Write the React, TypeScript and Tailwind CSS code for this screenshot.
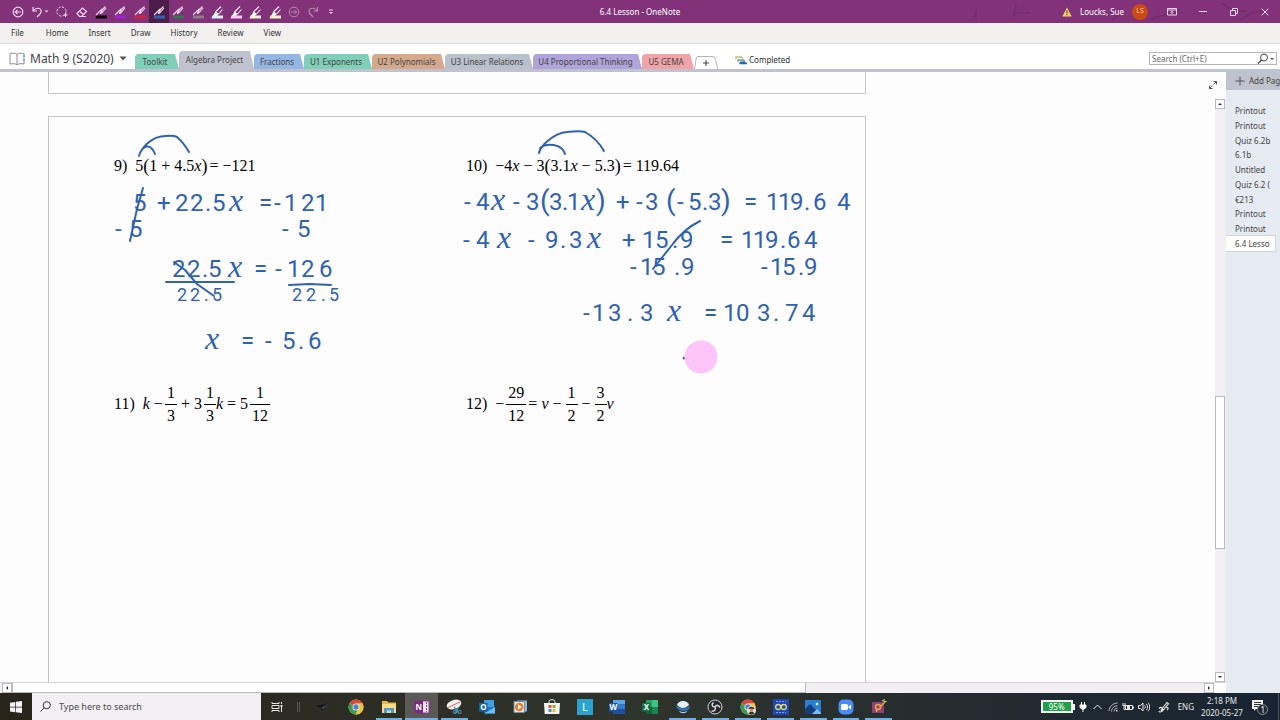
import type { ReactNode } from 'react';
import { clsx } from 'clsx';

/* ---------- Title bar ---------- */

const pens = [
  { name: 'Black pen', color: '#0b0008' },
  { name: 'Purple pen', color: '#a31fd8' },
  { name: 'Red pen', color: '#d3203c' },
  { name: 'Blue pen', color: '#2f66b4', active: true },
  { name: 'Green pen', color: '#2c7a4b' },
  { name: 'Gray pen', color: '#8b7f8c' },
];

const highlighters = [
  { name: 'Light blue highlighter', color: '#d9f1fb' },
  { name: 'Pink highlighter', color: '#fbcdf2' },
  { name: 'Cream highlighter', color: '#fbf6d5' },
  { name: 'Yellow highlighter', color: '#f6f7c0' },
];

const PenIcon = ({ color }: { color: string }) => (
  <svg viewBox="0 0 14 14" className="h-3.5 w-3.5" fill="none">
    <path d="M2.500 10.500h10.500v3H1.500z" fill={color} />
    <path d="M2 10 7.500 4.500C8.500 3.500 8.500 4.500 8 5.500L6.500 8C6 9 7 8.500 8 7.500L12 3M6.500 6.500 11.500 1.500" stroke="#f0d7ec" strokeWidth="1.100" />
  </svg>
);

const HighlighterIcon = ({ color }: { color: string }) => (
  <svg viewBox="0 0 14 14" className="h-3.5 w-3.5" fill="none">
    <path d="M2.500 10.500h10.500v3H1.500z" fill={color} />
    <path d="M3 11 5.500 6.500l3.500 2.500-2.500 2z" fill="#fff" />
    <path d="M5.500 7 11 1.500M8.500 9 12.500 4.500" stroke="#f6e6f4" strokeWidth="1.100" />
  </svg>
);

const IconButton = ({ label, className, children }: { label: string; className?: string; children: ReactNode }) => (
  <button aria-label={label} className={clsx('flex h-full items-center justify-center', className)}>
    {children}
  </button>
);

const TitleBar = () => (
  <header className="relative flex h-[23px] shrink-0 items-center justify-between bg-[#813278] text-[8px] text-white">
    <div className="flex h-full items-center">
      <IconButton label="Back" className="ml-2 w-5">
        <svg viewBox="0 0 12 12" className="h-3 w-3" fill="none" stroke="#f0d7ec" strokeWidth="1.200">
          <circle cx="6" cy="6" r="4.800" />
          <path d="M9 6H3.500M5.500 3.800 3.300 6l2.200 2.200" />
        </svg>
      </IconButton>
      <IconButton label="Undo" className="w-6">
        <svg viewBox="0 0 18 12" className="h-3 w-[18px]" fill="none" stroke="#f0d7ec" strokeWidth="1.200">
          <path d="M2 1v4h4M2.200 4.800C5 1.200 9.800 1.600 10.200 5c.2 2-1.600 3.600-4.200 6" />
          <path d="M13.500 4.500h4l-2 2z" fill="#f0d7ec" stroke="none" />
        </svg>
      </IconButton>
      <IconButton label="Lasso select" className="w-5">
        <svg viewBox="0 0 12 12" className="h-3 w-3" fill="none" stroke="#f0d7ec">
          <circle cx="5.500" cy="5.500" r="4.600" strokeDasharray="2.200 1.400" />
          <path d="M9.500 7v4M7.500 9h4" />
        </svg>
      </IconButton>
      <div className="flex h-full w-[251px]">
        <IconButton label="Eraser" className="flex-1">
          <svg viewBox="0 0 12 12" className="h-3 w-3" fill="none" stroke="#f0d7ec" strokeWidth="1.200">
            <path d="M1 7.500 6.500 2 10.500 5.500 5.500 10.500H3.500zM3.500 5l4 3.800M5 10.500h5" />
          </svg>
        </IconButton>
        {pens.map((pen) => (
          <IconButton key={pen.name} label={pen.name} className={clsx('flex-1', pen.active && 'bg-[#4c1d4b]')}>
            <PenIcon color={pen.color} />
          </IconButton>
        ))}
        {highlighters.map((pen) => (
          <IconButton key={pen.name} label={pen.name} className="flex-1">
            <HighlighterIcon color={pen.color} />
          </IconButton>
        ))}
        <IconButton label="Forward" className="flex-1">
          <svg viewBox="0 0 12 12" className="h-3 w-3" fill="none" stroke="#bd86b6">
            <circle cx="6" cy="6" r="4.800" />
            <path d="M3 6h5.500M6.500 3.800 8.700 6 6.500 8.200" />
          </svg>
        </IconButton>
        <IconButton label="Redo" className="flex-1">
          <svg viewBox="0 0 12 12" className="h-3 w-3" fill="none" stroke="#bd86b6" strokeWidth="1.200">
            <path d="M10.500 1v4h-4M10.300 4.800C7.500 1.200 2.400 1.600 2 5c-.2 2 1.600 3.600 4.200 6" />
          </svg>
        </IconButton>
      </div>
      <IconButton label="Customize toolbar" className="w-4">
        <svg viewBox="0 0 6 6" className="h-1.5 w-1.5">
          <path d="M1 .5h4v1H1zM1 3h4L3 5z" fill="#f0d7ec" />
        </svg>
      </IconButton>
    </div>

    {/* Faint leaf pattern of the window theme */}
    <svg viewBox="0 0 320 23" className="absolute right-0 top-0 h-[23px] w-80" fill="none" stroke="#6f2a68" strokeWidth="2" opacity="0.5">
      <path d="M12 19c2-4 3-8 5-10v10z" fill="#6f2a68" stroke="none" />
      <path d="M52 13h18M56 4l-2 12M152 20l12-8M190 20c8-6 20-4 30-10M262 3c6 4 12 10 24 8M280 20c8-4 12-10 26-8" />
    </svg>

    <span className="absolute left-1/2 -translate-x-1/2 whitespace-nowrap">6.4 Lesson - OneNote</span>

    <div className="relative flex h-full items-center">
      <svg viewBox="0 0 10 10" className="mr-2 h-2.5 w-2.5">
        <path d="M5 .5 9.700 9.500H.3z" fill="#f4cf6c" />
        <path d="M4.500 3.500h1v3h-1zM4.500 7.300h1v1h-1z" fill="#5c2a1c" />
      </svg>
      <span>Loucks, Sue</span>
      <span className="ml-2 flex h-4 w-4 items-center justify-center rounded-full bg-[#cb4a14] text-[7px] text-[#f8cfae]">LS</span>
      <IconButton label="Ribbon display options" className="ml-2 w-[31px]">
        <svg viewBox="0 0 10 8" className="h-2 w-2.5" fill="none" stroke="#f0d7ec">
          <path d="M.5.5h9v6.500h-9zM.5 2h9M5 6V3.500M3.600 4.600 5 3.200l1.400 1.400" />
        </svg>
      </IconButton>
      <IconButton label="Minimize" className="w-[31px]">
        <span className="h-px w-2 bg-[#f0d7ec]" />
      </IconButton>
      <IconButton label="Restore" className="w-[31px]">
        <svg viewBox="0 0 8 8" className="h-2 w-2" fill="none" stroke="#f0d7ec">
          <path d="M.5 2.500h5v5h-5zM2.500 2V.5h5v5H6" />
        </svg>
      </IconButton>
      <IconButton label="Close" className="w-[31px]">
        <svg viewBox="0 0 8 8" className="h-2 w-2" fill="none" stroke="#f0d7ec">
          <path d="m.7.7 6.600 6.600M7.300.7.7 7.300" />
        </svg>
      </IconButton>
    </div>
  </header>
);

/* ---------- Menu and section tabs ---------- */

const MenuBar = () => (
  <nav className="flex h-[21px] shrink-0 items-center gap-5 border-b border-[#dcdadb] bg-[#f1f0ef] pl-[11px] text-[8px] text-[#333]">
    <button className="mr-0.5">File</button>
    {['Home', 'Insert', 'Draw', 'History', 'Review', 'View'].map((item) => (
      <button key={item}>{item}</button>
    ))}
  </nav>
);

const sections = [
  { name: 'Toolkit', style: 'w-11 bg-[#80cfb9]' },
  { name: 'Algebra Project', style: 'h-[18px] w-[75px] bg-[#c0c3cd]', active: true },
  { name: 'Fractions', style: 'w-[50px] bg-[#93b6e3]' },
  { name: 'U1 Exponents', style: 'w-[68px] bg-[#80cfb9]' },
  { name: 'U2 Polynomials', style: 'w-[73px] bg-[#d5a98c]' },
  { name: 'U3 Linear Relations', style: 'w-[88px] bg-[#b9c1cb]' },
  { name: 'U4 Proportional Thinking', style: 'w-[109px] bg-[#b0a5da]' },
  { name: 'U5 GEMA', style: 'w-[52px] bg-[#f0a3a8]' },
];

const SectionBar = () => (
  <div className="flex h-7 shrink-0 items-end border-b-[3px] border-[#c0c3cd] bg-white text-[#444]">
    <button className="flex h-full w-[135px] shrink-0 items-center pl-[9px] pt-1 text-[12px]">
      <svg viewBox="0 0 16 14" className="mr-[5px] h-3.5 w-4" fill="none" stroke="#8d8d93">
        <path d="M8 2.500C6.500 1 4 1 1 1.500v10.500c3-.5 5.500-.5 7 .8 1.500-1.300 4-1.300 7-.8V1.500C12 1 9.500 1 8 2.500zM8 2.500v10" />
        <path d="M15 3v2M15 7v2" stroke="#5d8fbd" />
      </svg>
      <span className="whitespace-nowrap">Math 9 (S2020)</span>
      <svg viewBox="0 0 8 5" className="ml-[5px] h-[5px] w-2">
        <path d="M.5.5h7L4 4.500z" fill="#555" />
      </svg>
    </button>
    <div className="flex items-end">
      {sections.map((section) => (
        <button
          key={section.name}
          className={clsx(
            'flex h-[15px] items-center justify-center whitespace-nowrap rounded-t pr-1 text-[8px] [clip-path:polygon(0_0,calc(100%-4px)_0,100%_100%,0_100%)]',
            section.style,
            section.active && 'pb-px',
          )}
        >
          {section.name}
        </button>
      ))}
      <button aria-label="New section" className="h-[13px] w-[25px]">
        <svg viewBox="0 0 25 13" className="h-[13px] w-[25px]" fill="none">
          <path d="M.5 13C2 8 1 .5 4 .5h15c3 0 3 8 5 12.500" stroke="#b4b5ba" />
          <path d="M12 4v6M9 7h6" stroke="#444" />
        </svg>
      </button>
    </div>
    <button className="mb-[3px] ml-4 flex items-center text-[8px] text-[#333]">
      <svg viewBox="0 0 12 9" className="mr-0.5 h-[9px] w-3" fill="none" strokeWidth="1.500">
        <path d="M1 3V1h5l2 1.500" stroke="#c9b96a" />
        <path d="M3 5.500V4h5l2 1" stroke="#69a58f" />
        <path d="M5 7.500c0-2 5-2 6.500 0z" fill="#2e67b1" stroke="#2e67b1" />
      </svg>
      Completed
    </button>
    <div className="mb-1 ml-auto mr-[3px] flex h-[13px] w-32 items-center border border-[#b5b5b9]">
      <input
        type="text"
        aria-label="Search"
        placeholder="Search (Ctrl+E)"
        className="min-w-0 flex-1 bg-transparent pl-0.5 text-[8px] outline-none placeholder:text-[#666]"
      />
      <button aria-label="Search options" className="mr-px">
        <svg viewBox="0 0 18 11" className="h-[11px] w-[18px]" fill="none" stroke="#444">
          <circle cx="7" cy="4.500" r="3.500" />
          <path d="M4.500 7 1 10.500" strokeWidth="1.200" />
          <path d="M13 5h4l-2 2z" fill="#444" stroke="none" />
        </svg>
      </button>
    </div>
  </div>
);

/* ---------- Worksheet ---------- */

const Frac = ({ top, bottom }: { top: string; bottom: string }) => (
  <span className="inline-flex flex-col text-center leading-[22px]">
    <span className="border-b border-black px-0.5">{top}</span>
    <span className="px-0.5">{bottom}</span>
  </span>
);

const Problem = ({ number, children }: { number: number; children: ReactNode }) => (
  <div className="flex h-11 items-center whitespace-nowrap">
    <span className="mr-2">{number})</span>
    {children}
  </div>
);

// Pen ink: one entry per written line, with the left edge of every character
const inkLines = [
  { text: '5+22.5x=-121', y: 211, xs: [133, 157, 175, 190, 205, 212, 229, 259, 274, 284, 301, 315] },
  { text: '-5-5', y: 237, xs: [115, 129, 282, 297] },
  { text: '22.5x=-126', y: 277, xs: [172, 187, 202, 208, 228, 254, 275, 287, 301, 319] },
  { text: 'x=-5.6', y: 349, xs: [205, 241, 265, 282, 298, 308] },
  { text: '-4x-3(3.1x)+-3(-5.3)=119.64', y: 210, xs: [464, 476, 491, 513, 526, 540, 549, 562, 567, 581, 596, 616, 636, 645, 666, 677, 688, 702, 708, 721, 744, 766, 778, 790, 804, 813, 837] },
  { text: '-4x-9.3x+15.9=119.64', y: 248, xs: [463, 476, 497, 528, 545, 560, 569, 587, 622, 642, 655, 672, 680, 720, 741, 753, 765, 780, 787, 804] },
  { text: '-15.9-15.9', y: 275, xs: [630, 640, 652, 674, 681, 761, 770, 782, 798, 804] },
  { text: '-13.3x=103.74', y: 321, xs: [583, 592, 608, 627, 640, 667, 704, 723, 736, 757, 773, 785, 802] },
];

const inkDenominators = [
  { text: '22.5', y: 301, xs: [177, 190, 204, 212] },
  { text: '22.5', y: 301, xs: [292, 306, 321, 329] },
];

const inkGlyphs: Record<string, string> = {
  x: "font-['Liberation_Serif',serif] text-[32px] italic",
  '(': 'text-[28px]',
  ')': 'text-[28px]',
};

const InkText = ({ text, y, xs }: { text: string; y: number; xs: number[] }) => (
  <text y={y}>
    {text.split('').map((char, i) => (
      <tspan key={i} x={xs[i]} className={inkGlyphs[char]}>
        {char}
      </tspan>
    ))}
  </text>
);

const InkLayer = () => (
  <svg
    viewBox="48 116 818 566"
    className="pointer-events-none absolute -left-px -top-px h-[566px] w-[818px] font-['Roboto',sans-serif]"
    fill="none"
  >
    <g fill="#2f62b3" className="text-[24px]">
      {inkLines.map((line) => (
        <InkText key={line.y + line.text} {...line} />
      ))}
    </g>
    <g fill="#2f62b3" className="text-[18px]">
      {inkDenominators.map((line) => (
        <InkText key={line.xs[0]} {...line} />
      ))}
    </g>
    <g stroke="#2f62b3" strokeWidth="2" strokeLinecap="round" strokeLinejoin="round">
      {/* distribution arcs */}
      <path d="M139 156C141 148 151 138 161 136.500C169 135.500 175 136 177 137C182 141 186 147 189 152M141 151C145 145 151 144 155 154" />
      <path d="M539 153C540 146 554 133 567 132C575 131 582 131 585 132C594 137 600 144 604 151M540 148C546 143 562 143 565 154" />
      {/* crossed out terms */}
      <path d="M143 188 137 209 130 241" />
      <path d="M174 262 185 270 197 284 214 296" />
      <path d="M653 269 672 245C680 234 690 226 700 221" />
      {/* fraction bars */}
      <path d="M166 282 234 282M289 285 310 284 331 285" />
    </g>
    <circle cx="684" cy="358" r="1.500" fill="#5f5a95" />
    <circle cx="701" cy="357" r="16.500" fill="#fcc5fa" />
  </svg>
);

const Worksheet = () => (
  <div className="relative ml-12 mt-[22px] h-[640px] w-[818px] border border-[#c3c3c8] pl-[65px] pt-[27px] font-['Liberation_Serif',serif] text-[16px] text-black">
    <div className="grid grid-cols-[352px_1fr] gap-y-[194px]">
      <Problem number={9}>
        <span>5</span>
        <span className="text-[18px]">(</span>
        <span>1 + 4.5<i>x</i></span>
        <span className="mr-0.5 text-[18px]">)</span>
        <span>= −121</span>
      </Problem>
      <Problem number={10}>
        <span>−4<i>x</i> − 3</span>
        <span className="text-[18px]">(</span>
        <span>3.1<i>x</i> − 5.3</span>
        <span className="mr-0.5 text-[18px]">)</span>
        <span>= 119.64</span>
      </Problem>
      <Problem number={11}>
        <span className="mr-0.5"><i>k</i> −</span>
        <Frac top="1" bottom="3" />
        <span className="ml-1 mr-0.5">+ 3</span>
        <Frac top="1" bottom="3" />
        <span className="mr-0.5"><i>k</i> = 5</span>
        <Frac top="1" bottom="12" />
      </Problem>
      <Problem number={12}>
        <span className="mr-0.5">−</span>
        <Frac top="29" bottom="12" />
        <span className="ml-0.5 mr-1">= <i>v</i> −</span>
        <Frac top="1" bottom="2" />
        <span className="mx-1">−</span>
        <Frac top="3" bottom="2" />
        <i>v</i>
      </Problem>
    </div>
    <InkLayer />
  </div>
);

const arrows = {
  up: 'M1 4h4L3 2z',
  down: 'M1 2h4L3 4z',
  left: 'M4 1v4L2 3z',
  right: 'M2 1v4l2-2z',
};

const ScrollArrow = ({ direction }: { direction: keyof typeof arrows }) => (
  <button
    aria-label={`Scroll ${direction}`}
    className="flex h-2.5 w-2.5 shrink-0 items-center justify-center border border-[#b9b9be] bg-white"
  >
    <svg viewBox="0 0 6 6" className="h-1.5 w-1.5">
      <path d={arrows[direction]} fill="#333" />
    </svg>
  </button>
);

const Canvas = () => (
  <main className="relative flex min-w-0 flex-1 flex-col bg-[#fefdfe]">
    <div className="flex min-h-0 flex-1">
      <div className="min-w-0 flex-1 overflow-hidden">
        {/* Bottom edge of the previous printout page */}
        <div className="ml-12 h-[22px] w-[818px] border border-t-0 border-[#c3c3c8]" />
        <Worksheet />
      </div>
      <div className="mt-[27px] flex w-[11px] flex-col bg-[#f1eff1]">
        <ScrollArrow direction="up" />
        <div className="flex-[287]" />
        <div className="mr-px flex-[151] border border-[#b9b9be] bg-white" />
        <div className="flex-[123]" />
        <ScrollArrow direction="down" />
      </div>
    </div>
    <div className="flex h-[11px] border-t border-[#d5d5d9] bg-[#f1eff1] pl-0.5">
      <ScrollArrow direction="left" />
      <div className="flex-[793] border border-t-0 border-[#b9b9be] bg-white" />
      <div className="flex-[398]" />
      <ScrollArrow direction="right" />
      <div className="w-3 bg-white" />
    </div>
    <button aria-label="Full page view" className="absolute right-2 top-2">
      <svg viewBox="0 0 10 10" className="h-2.5 w-2.5" fill="none" stroke="#555">
        <path d="M5.500 1.500h3v3M8.500 1.500 5.500 4.500M1.500 5.500v3h3M1.500 8.500l3-3" />
      </svg>
    </button>
  </main>
);

const pages = ['Printout', 'Printout', 'Quiz 6.2b', '6.1b', 'Untitled', 'Quiz 6.2 (', '€213', 'Printout', 'Printout', '6.4 Lesso'];

const PageList = () => (
  <aside className="w-[54px] shrink-0 overflow-hidden bg-[#e6eaf1] text-[8px] text-[#444]">
    <button className="flex h-[18px] w-full items-center whitespace-nowrap bg-[#c0c3cd] pl-[9px]">
      <svg viewBox="0 0 10 10" className="mr-1 h-2.5 w-2.5 shrink-0" fill="none" stroke="#555">
        <path d="M5 .5v9M.5 5h9" />
      </svg>
      Add Pag
    </button>
    <ul className="mt-3.5 grid h-[147px] auto-rows-fr">
      {pages.map((page, i) => (
        <li key={i} className="min-h-0">
          <button
            className={clsx(
              'flex h-full w-[49px] items-center whitespace-nowrap pl-[9px]',
              i === pages.length - 1 && 'bg-white outline outline-[#d3d5dc]',
            )}
          >
            {page}
          </button>
        </li>
      ))}
    </ul>
  </aside>
);

/* ---------- Taskbar ---------- */

const ChromeLogo = () => (
  <>
    <circle cx="8" cy="8" r="7.500" fill="#e8c53a" />
    <path d="M8 8 1.500 4.300A7.500 7.500 0 0 1 14.500 4.300z" fill="#d8473a" />
    <path d="M1.500 4.300A7.500 7.500 0 0 0 7.500 15.500L10.500 9.500 8 8z" fill="#3d9a52" />
    <path d="M8 4.300h6.500A7.500 7.500 0 0 1 7.500 15.500L11 9z" fill="#f0c53a" />
    <circle cx="8" cy="8" r="3.500" fill="#f3f3ee" />
    <circle cx="8" cy="8" r="2.700" fill="#4a84d6" />
  </>
);

const apps: { name: string; open?: boolean; active?: boolean; icon: ReactNode }[] = [
  { name: 'Chrome', icon: <ChromeLogo /> },
  {
    name: 'File Explorer',
    open: true,
    icon: (
      <>
        <path d="M1 2h5l1.500 1.500H15V14H1z" fill="#e5b94c" />
        <path d="M1 5h14v9H1z" fill="#f8dc85" />
        <path d="M3 14V9h10v5h-3v-2.500H6V14z" fill="#4a9cd8" />
      </>
    ),
  },
  {
    name: 'OneNote',
    open: true,
    active: true,
    icon: (
      <>
        <path d="M7 2h8v12H7z" fill="#f4e9f4" stroke="#8a3a8c" />
        <path d="M12.500 3v10" stroke="#8a3a8c" strokeDasharray="2 1" />
        <path d="M0 2.500 9 1v14l-9-1.500z" fill="#7c2b80" />
        <text x="1.500" y="11" fill="#fff" fontSize="8" fontWeight="bold">N</text>
      </>
    ),
  },
  {
    name: 'Snipping Tool',
    open: true,
    icon: (
      <>
        <ellipse cx="8" cy="5.500" rx="7.500" ry="4.500" transform="rotate(-18 8 5.500)" fill="#f4eeee" />
        <path d="M2 8.500 14 3" stroke="#d4676a" />
        <path d="m8 8 5 6M13 8l-4 6" stroke="#4a90b5" strokeWidth="1.300" />
        <circle cx="9" cy="13" r="1.700" stroke="#4a90b5" fill="none" />
        <circle cx="13.500" cy="13" r="1.700" stroke="#4a90b5" fill="none" />
      </>
    ),
  },
  {
    name: 'Outlook',
    icon: (
      <>
        <path d="M5 1h10v13H5z" fill="#3f9fe0" />
        <path d="M5 8h11v6.500H5z" fill="#2170bd" />
        <path d="m6 14 10-6v6.500H6z" fill="#6cc0ee" />
        <path d="M0 4h8.500v8.500H0z" fill="#1260ae" />
        <text x="1.200" y="11" fill="#fff" fontSize="8" fontWeight="bold">O</text>
      </>
    ),
  },
  {
    name: 'Media Player',
    icon: (
      <>
        <path d="M5 1.500h10v11H5z" fill="#8db9d6" />
        <path d="M2 2.500h10.500v11H2z" fill="#e9e2dc" stroke="#6e93ad" />
        <circle cx="7.200" cy="8" r="4.200" fill="#ea7d27" />
        <path d="m6 5.500 4 2.500-4 2.500z" fill="#fff" />
      </>
    ),
  },
  {
    name: 'Microsoft Store',
    icon: (
      <>
        <path d="M5 5V2.500C5 0 11 0 11 2.500V5" stroke="#eee" />
        <path d="M0 4h16l-.7 11H.7z" fill="#f5f5f3" />
        <path d="M4.500 6h3v3h-3z" fill="#e3542c" />
        <path d="M8.500 6h3v3h-3z" fill="#7fb440" />
        <path d="M4.500 10h3v3h-3z" fill="#3a93d2" />
        <path d="M8.500 10h3v3h-3z" fill="#efb734" />
      </>
    ),
  },
  {
    name: 'Lexia',
    icon: (
      <>
        <path d="M0 0h16v16H0z" fill="#2ba3cf" />
        <text x="5" y="12" fill="#fff" fontSize="11">L</text>
      </>
    ),
  },
  {
    name: 'Word',
    icon: (
      <>
        <path d="M4 1h12v4.500H4z" fill="#5aa6e8" />
        <path d="M4 5.500h12V10H4z" fill="#3478cf" />
        <path d="M4 10h12v5H4z" fill="#1f4f9f" />
        <path d="M0 4h8.500v8.500H0z" fill="#1c55ae" />
        <text x=".5" y="11" fill="#fff" fontSize="8" fontWeight="bold">W</text>
      </>
    ),
  },
  {
    name: 'Excel',
    icon: (
      <>
        <path d="M4 1h6v7H4z" fill="#259c62" />
        <path d="M10 1h6v7h-6z" fill="#3fc485" />
        <path d="M4 8h6v7H4z" fill="#145f38" />
        <path d="M10 8h6v7h-6z" fill="#1a8350" />
        <path d="M0 4h8.500v8.500H0z" fill="#12733f" />
        <text x="1.700" y="11" fill="#fff" fontSize="8" fontWeight="bold">X</text>
      </>
    ),
  },
  {
    name: 'SMART Ink',
    open: true,
    icon: (
      <>
        <circle cx="8" cy="8" r="6.500" fill="#27414f" />
        <path d="M2 6a6.500 6.500 0 0 1 12 0c-2 2-4 3-6 3S4 8 2 6z" fill="#e9f4fa" />
        <path d="M1 6c3 4 9 5 14 1l-1 3c-4 3-9 2-12-1z" fill="#2e7ec0" />
        <path d="M4 12c3 1.500 6 1.500 8 0-1 3-6 3-8 0z" fill="#cfdde4" />
      </>
    ),
  },
  {
    name: 'OBS Studio',
    open: true,
    icon: (
      <>
        <circle cx="8" cy="8" r="7" fill="#25252b" stroke="#d5d5d5" />
        <path d="M8 8C5 8 4 5 6.500 3.500M8 8c1.500-2.500 4.500-2 4.700.8M8 8c1.300 2.500-.8 5-3.500 3.800" stroke="#d5d5d5" strokeWidth="1.500" />
      </>
    ),
  },
  {
    name: 'Chrome profile',
    open: true,
    icon: (
      <>
        <ChromeLogo />
        <circle cx="11.500" cy="11.500" r="4.500" fill="#e9e2d8" />
        <path d="M8.500 10c1-3 5-3 6 0z" fill="#222" />
        <circle cx="11.500" cy="11" r="1.800" fill="#c98f70" />
        <path d="M8.500 14.500c1-2.500 5-2.500 6 0-2 1.500-4 1.500-6 0z" fill="#333" />
      </>
    ),
  },
  {
    name: 'Desmos',
    open: true,
    icon: (
      <>
        <path d="M0 0h16v16H0z" fill="#1e46b8" />
        <path d="M3 2.500h10M3 13.500h10" stroke="#6fa6ea" strokeDasharray="2 1" />
        <circle cx="5.200" cy="8" r="2.500" stroke="#e2dc5b" strokeWidth="1.300" />
        <circle cx="10.800" cy="8" r="2.500" stroke="#e2dc5b" strokeWidth="1.300" />
      </>
    ),
  },
  {
    name: 'Photos',
    open: true,
    icon: (
      <>
        <path d="M0 1h16v14H0z" fill="#2b7fd3" />
        <path d="M0 15V10l5-5 10 10z" fill="#123f78" />
        <path d="m7 15 5-5 4 4v1z" fill="#7dbdf2" />
        <circle cx="12" cy="5" r="1.300" fill="#e6f2fc" />
      </>
    ),
  },
  {
    name: 'Zoom',
    open: true,
    icon: (
      <>
        <rect x=".5" y=".5" width="15" height="15" rx="5" fill="#4a8cf5" />
        <rect x="3" y="5" width="7" height="6" rx="1.500" fill="#fff" />
        <path d="m10.500 7.500 2.500-2v5l-2.500-2z" fill="#fff" />
      </>
    ),
  },
  {
    name: 'Paint',
    open: true,
    icon: (
      <>
        <path d="M1 3h10l2 2v9H1z" fill="#8b4079" />
        <circle cx="7" cy="8" r="2.500" stroke="#f0a23c" strokeWidth="1.500" />
        <path d="M5.500 9.500V13M9 8l5-5" stroke="#f0a23c" strokeWidth="1.500" />
        <path d="M13 0v3M15.500 2.500h-2M11 1l1 1.500" stroke="#f1cf5c" />
      </>
    ),
  },
];

const Tray = () => (
  <div className="ml-auto flex h-full items-center text-[8px] text-[#e8e8e8]">
    <div className="flex items-center">
      <span className="flex h-[13px] w-8 items-center justify-center border-2 border-[#eef4ef] bg-[#22a04c] leading-none text-white">95%</span>
      <span className="h-1.5 w-0.5 bg-[#eef4ef]" />
    </div>
    <svg viewBox="0 0 8 10" className="ml-1 h-2.5 w-2" fill="none" stroke="#fff">
      <path d="M1 3h6v2.500L5 7H3L1 5.500z" fill="#fff" />
      <path d="M2.500 0v3M5.500 0v3M4 7v3" />
    </svg>
    <button aria-label="Show hidden icons" className="ml-1.5">
      <svg viewBox="0 0 9 6" className="h-1.5 w-[9px]" fill="none" stroke="#e8e8e8">
        <path d="m.5 5 4-4 4 4" />
      </svg>
    </button>
    <svg viewBox="0 0 10 10" className="ml-1.5 h-2.5 w-2.5" fill="none" stroke="#b7bcc0">
      <path d="M1 9C1 5 5 1 9.500 1M3.500 9.500C3.500 6.500 6 3.800 9.500 3.800M6 9.500c0-2 1.500-3.200 3.500-3.200" />
      <circle cx="8.800" cy="8.800" r=".8" fill="#fff" stroke="none" />
    </svg>
    <svg viewBox="0 0 12 8" className="ml-1 h-2 w-3" fill="none" stroke="#e8e8e8">
      <path d="M3.500 2.500h7v4h-7zM11.500 3.500v2M1 0v2M3 0v2M.5 2.500h3M2 3v3.500h2" />
      <path d="M5 3h3v3H5z" fill="#e8e8e8" stroke="none" />
    </svg>
    <svg viewBox="0 0 12 10" className="ml-1 h-2.5 w-3" fill="none" stroke="#e8e8e8">
      <path d="M.5 3.500h2L5 1v8L2.500 6.500h-2zM6.500 3.500c1 1 1 2 0 3M8.300 2c1.700 2 1.700 4 0 6M10 .7c2.300 2.600 2.300 6 0 8.600" />
    </svg>
    <svg viewBox="0 0 12 12" className="ml-2 h-3 w-3" fill="none" stroke="#e8e8e8" strokeWidth="1.100">
      <path d="M3 9 9 1.500l1.500 1.300L4.500 10zM1 7.500c2-2 4-1 3.500 1S2 12 .8 10M7 6.500c3-1 4 1 2 2.500" />
    </svg>
    <span className="ml-2">ENG</span>
    <div className="ml-1.5 w-11 text-center leading-3">
      <div>2:18 PM</div>
      <div>2020-05-27</div>
    </div>
    <button aria-label="1 new notification" className="ml-2 mr-2.5 h-4 w-4">
      <svg viewBox="0 0 16 16" className="h-4 w-4" fill="none">
        <path d="M0 1h11v9H4l-2 2v-2H0z" fill="#f2f2f2" />
        <path d="M2 3.500h7M2 5.500h7M2 7.500h4" stroke="#26303a" />
        <circle cx="10.500" cy="10.500" r="5" fill="#1d2730" stroke="#8b949b" />
        <text x="8.500" y="13.500" fill="#fff" fontSize="8">1</text>
      </svg>
    </button>
    <span className="h-full w-px bg-[#4d565e]" />
    <span className="w-px" />
  </div>
);

const Taskbar = () => (
  <footer className="flex h-[27px] shrink-0 items-center bg-linear-to-r from-[#28241a] via-[#2f342c] to-[#182432]">
    <button aria-label="Start" className="flex h-full w-8 items-center justify-center">
      <svg viewBox="0 0 12 12" className="h-3 w-3" fill="#f5f5f5">
        <path d="m0 1.700 5.300-.8v4.800H0zM6 .8 12 0v5.700H6zM0 6.400h5.300v4.800L0 10.400zM6 6.400h6V12l-6-.8z" />
      </svg>
    </button>
    <label className="flex h-full w-[229px] items-center bg-[#f2f0f2] pl-2">
      <svg viewBox="0 0 11 11" className="mr-2 h-[11px] w-[11px]" fill="none" stroke="#333">
        <circle cx="6.800" cy="4.200" r="3.600" />
        <path d="M4.200 6.800.5 10.500" />
      </svg>
      <input
        type="text"
        aria-label="Type here to search"
        placeholder="Type here to search"
        className="min-w-0 flex-1 bg-transparent text-[9px] outline-none placeholder:text-[#4b4b4b]"
      />
    </label>
    <button aria-label="Task view" className="ml-2.5 h-full">
      <svg viewBox="0 0 12 10" className="h-2.5 w-3" fill="none" stroke="#e4e4e0">
        <path d="M1 0v1.500h7V0M1 3.500h7v3H1zM1 10V8.500h7V10M10.500 0v2M10.500 5v5" />
        <path d="M9.500 3h2v2h-2z" fill="#e4e4e0" stroke="none" />
      </svg>
    </button>
    <span className="ml-[14px] flex h-2.5 w-[3px] border-x border-[#5c5a50]" />
    <svg viewBox="0 0 14 10" className="ml-4 mr-2.5 h-2.5 w-3.5">
      <path d="m0 4 13-3-5 5-2 3-1-3z" fill="#14161c" />
      <path d="m5 6 8-5-6 6z" fill="#4a4c58" />
    </svg>
    <div className="flex h-full w-[555px]">
      {apps.map((app) => (
        <button
          key={app.name}
          aria-label={app.name}
          className={clsx('relative flex flex-1 items-center justify-center', app.active && 'bg-[#5a5957]')}
        >
          <svg viewBox="0 0 16 16" className="h-4 w-4" fill="none">{app.icon}</svg>
          {app.open && (
            <span className={clsx('absolute bottom-0 h-0.5 bg-[#70b0e4]', app.active ? 'inset-x-0' : 'inset-x-[3px]')} />
          )}
        </button>
      ))}
    </div>
    <Tray />
  </footer>
);

const App = () => (
  <div className="flex h-screen flex-col overflow-hidden bg-white font-['Noto_Sans','Open_Sans',sans-serif]">
    <TitleBar />
    <MenuBar />
    <SectionBar />
    <div className="flex min-h-0 flex-1">
      <Canvas />
      <PageList />
    </div>
    <Taskbar />
  </div>
);

export default App;
